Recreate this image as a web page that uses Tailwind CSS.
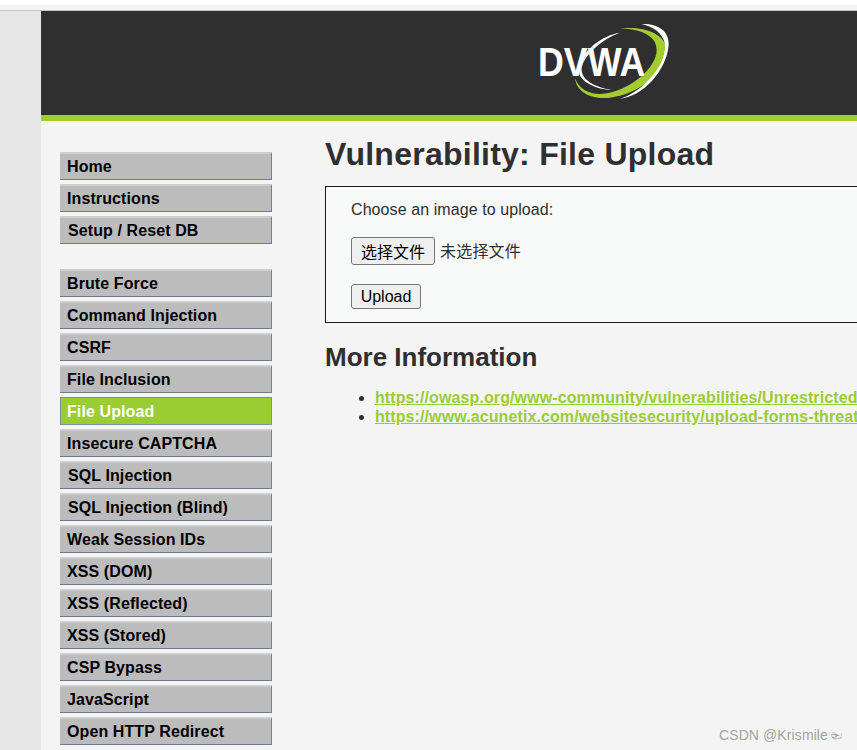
<!DOCTYPE html>
<html>
<head>
<meta charset="utf-8">
<script src="https://cdn.jsdelivr.net/npm/@tailwindcss/browser@4"></script>
</head>
<body class="w-[857px] h-[750px] overflow-hidden bg-[#f4f4f4] font-['Liberation_Sans','Noto_Sans_CJK_SC',sans-serif] relative">
<div class="h-[5px] bg-white"></div>
<div class="h-[5px] bg-[#f3f3f3]"></div>
<div class="h-px bg-[#c4c4c4]"></div>
<div class="flex h-[739px]">
  <div class="w-[41px] shrink-0 bg-[#e7e7e7]"></div>
  <div class="flex-1 min-w-0">
    <header class="h-[110px] bg-[#2f2f2f] border-b-[6px] border-[#a3cd2f] pl-[469px]">
      <svg class="block" width="190" height="104" viewBox="0 33 570 312">
        <path d="M195 235 C200 280 250 300 300 293 C380 285 470 220 468 145 C465 100 400 78 330 85 C400 88 440 110 440 150 C440 200 370 265 290 280 C250 287 210 275 195 235 Z" fill="#a3cd2f"/>
        <path d="M395 72 C440 70 478 90 476 135 C470 210 400 290 330 296 C390 280 470 200 465 135 C460 100 430 80 395 72 Z" fill="#fff"/>
        <path d="M330 98 C280 105 215 150 205 205 C202 240 250 268 305 270 C255 262 212 240 215 205 C220 165 280 115 330 98 Z" fill="#fff"/>
        <text x="84" y="228" font-family="Liberation Sans" font-weight="700" font-size="122" fill="#fff" stroke="#2f2f2f" stroke-width="1" paint-order="stroke" textLength="322" lengthAdjust="spacingAndGlyphs">DVWA</text>
      </svg>
    </header>
    <div class="flex">
      <nav class="w-[212px] ml-[19px] mt-[31px] shrink-0 flex flex-col gap-[25px]">
        <ul class="flex flex-col gap-1">
          <li class="h-[28px] bg-[#bcbcbc] border-t-2 border-r border-b border-t-[#cfcfcf] border-r-[#7a7f94] border-b-[#737890] pl-[7px] text-[16px] leading-[26px] font-bold tracking-[0.1px] text-black">Home</li>
          <li class="h-[28px] bg-[#bcbcbc] border-t-2 border-r border-b border-t-[#cfcfcf] border-r-[#7a7f94] border-b-[#737890] pl-[7px] text-[16px] leading-[26px] font-bold tracking-[0.1px] text-black">Instructions</li>
          <li class="h-[28px] bg-[#bcbcbc] border-t-2 border-r border-b border-t-[#cfcfcf] border-r-[#7a7f94] border-b-[#737890] pl-[8px] text-[16px] leading-[26px] font-bold tracking-[0.1px] text-black">Setup / Reset DB</li>
        </ul>
        <ul class="flex flex-col gap-1">
          <li class="h-[28px] bg-[#bcbcbc] border-t-2 border-r border-b border-t-[#cfcfcf] border-r-[#7a7f94] border-b-[#737890] pl-[7px] text-[16px] leading-[26px] font-bold tracking-[0.1px] text-black">Brute Force</li>
          <li class="h-[28px] bg-[#bcbcbc] border-t-2 border-r border-b border-t-[#cfcfcf] border-r-[#7a7f94] border-b-[#737890] pl-[7px] text-[16px] leading-[26px] font-bold tracking-[0.1px] text-black">Command Injection</li>
          <li class="h-[28px] bg-[#bcbcbc] border-t-2 border-r border-b border-t-[#cfcfcf] border-r-[#7a7f94] border-b-[#737890] pl-[7px] text-[16px] leading-[26px] font-bold tracking-[0.1px] text-black">CSRF</li>
          <li class="h-[28px] bg-[#bcbcbc] border-t-2 border-r border-b border-t-[#cfcfcf] border-r-[#7a7f94] border-b-[#737890] pl-[7px] text-[16px] leading-[26px] font-bold tracking-[0.1px] text-black">File Inclusion</li>
          <li class="h-[28px] bg-[#9acd32] border border-[#7a90a8] pl-[6px] text-[16px] leading-[27px] font-bold tracking-[0.1px] text-white">File Upload</li>
          <li class="h-[28px] bg-[#bcbcbc] border-t-2 border-r border-b border-t-[#cfcfcf] border-r-[#7a7f94] border-b-[#737890] pl-[7px] text-[16px] leading-[26px] font-bold tracking-[0.1px] text-black">Insecure CAPTCHA</li>
          <li class="h-[28px] bg-[#bcbcbc] border-t-2 border-r border-b border-t-[#cfcfcf] border-r-[#7a7f94] border-b-[#737890] pl-[8px] text-[16px] leading-[26px] font-bold tracking-[0.1px] text-black">SQL Injection</li>
          <li class="h-[28px] bg-[#bcbcbc] border-t-2 border-r border-b border-t-[#cfcfcf] border-r-[#7a7f94] border-b-[#737890] pl-[8px] text-[16px] leading-[26px] font-bold tracking-[0.1px] text-black">SQL Injection (Blind)</li>
          <li class="h-[28px] bg-[#bcbcbc] border-t-2 border-r border-b border-t-[#cfcfcf] border-r-[#7a7f94] border-b-[#737890] pl-[7px] text-[16px] leading-[26px] font-bold tracking-[0.1px] text-black">Weak Session IDs</li>
          <li class="h-[28px] bg-[#bcbcbc] border-t-2 border-r border-b border-t-[#cfcfcf] border-r-[#7a7f94] border-b-[#737890] pl-[7px] text-[16px] leading-[26px] font-bold tracking-[0.1px] text-black">XSS (DOM)</li>
          <li class="h-[28px] bg-[#bcbcbc] border-t-2 border-r border-b border-t-[#cfcfcf] border-r-[#7a7f94] border-b-[#737890] pl-[7px] text-[16px] leading-[26px] font-bold tracking-[0.1px] text-black">XSS (Reflected)</li>
          <li class="h-[28px] bg-[#bcbcbc] border-t-2 border-r border-b border-t-[#cfcfcf] border-r-[#7a7f94] border-b-[#737890] pl-[7px] text-[16px] leading-[26px] font-bold tracking-[0.1px] text-black">XSS (Stored)</li>
          <li class="h-[28px] bg-[#bcbcbc] border-t-2 border-r border-b border-t-[#cfcfcf] border-r-[#7a7f94] border-b-[#737890] pl-[7px] text-[16px] leading-[26px] font-bold tracking-[0.1px] text-black">CSP Bypass</li>
          <li class="h-[28px] bg-[#bcbcbc] border-t-2 border-r border-b border-t-[#cfcfcf] border-r-[#7a7f94] border-b-[#737890] pl-[7px] text-[16px] leading-[26px] font-bold tracking-[0.1px] text-black">JavaScript</li>
          <li class="h-[28px] bg-[#bcbcbc] border-t-2 border-r border-b border-t-[#cfcfcf] border-r-[#7a7f94] border-b-[#737890] pl-[7px] text-[16px] leading-[26px] font-bold tracking-[0.1px] text-black">Open HTTP Redirect</li>
        </ul>
      </nav>
      <main class="ml-[53px] flex-1 min-w-0 text-[#2f2f2f]">
        <h1 class="mt-[14px] text-[32px] leading-[38px] font-bold whitespace-nowrap tracking-[0.25px]">Vulnerability: File Upload</h1>
        <div class="mt-[13px] w-[600px] h-[137px] bg-[#f8f9f9] border border-[#1a1a1a] pl-[25px] pt-[14px]">
          <p class="text-[16px] leading-[18px] tracking-[0.08px]">Choose an image to upload:</p>
          <div class="mt-[18px] flex items-center h-[28px]">
            <button class="w-[84px] h-[28px] bg-[#efefef] border border-[#767676] rounded-[3px] pt-[3px] text-[16px] leading-[20px] text-black">选择文件</button>
            <span class="ml-[5px] pt-[2px] text-[16px] tracking-[0.2px]">未选择文件</span>
          </div>
          <button class="mt-[19px] block w-[70px] h-[25px] bg-[#efefef] border border-[#767676] rounded-[3px] text-[16px] leading-[23px] text-black">Upload</button>
        </div>
        <h2 class="mt-[19px] text-[26px] leading-[30px] font-bold whitespace-nowrap">More Information</h2>
        <ul class="mt-[16px] pl-[50px] list-disc marker:text-[#2f2f2f] text-[16px] leading-[19px] font-bold text-[#9acd32] whitespace-nowrap tracking-[0.1px]">
          <li><a class="underline">https://owasp.org/www-community/vulnerabilities/Unrestricted_File_Upload</a></li>
          <li><a class="underline">https://www.acunetix.com/websitesecurity/upload-forms-threat/</a></li>
        </ul>
      </main>
    </div>
  </div>
</div>
<div class="absolute left-[719px] top-[726px] text-[14px] leading-[18px] text-[#a3a3a3] whitespace-nowrap tracking-[0.1px]">CSDN @Krismile☜</div>
</body>
</html>
